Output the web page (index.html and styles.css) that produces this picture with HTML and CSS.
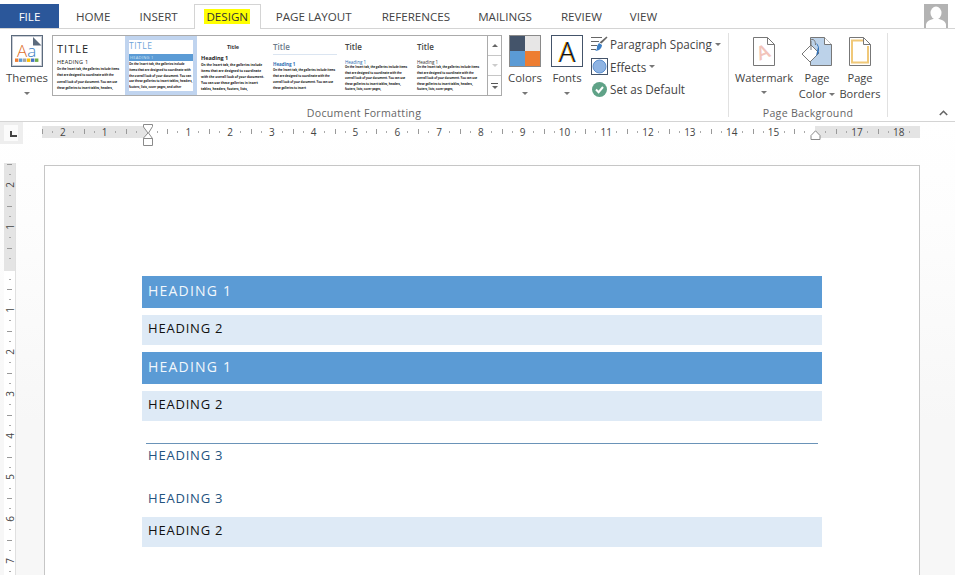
FILE: index.html
```html
<!DOCTYPE html>
<html lang="en">
<head>
<meta charset="utf-8">
<title>Design tab</title>
<link rel="stylesheet" href="styles.css">
</head>
<body>
<div class="app">
  <nav class="tabs">
    <div class="tab tab-file">FILE</div>
    <div class="tab tab-home">HOME</div>
    <div class="tab tab-insert">INSERT</div>
    <div class="tab tab-design"><span class="hl">DESIGN</span></div>
    <div class="tab tab-layout">PAGE LAYOUT</div>
    <div class="tab tab-refs">REFERENCES</div>
    <div class="tab tab-mail">MAILINGS</div>
    <div class="tab tab-review">REVIEW</div>
    <div class="tab tab-view">VIEW</div>
    <div class="avatar">
      <svg width="24" height="24" viewBox="0 0 24 24"><rect width="24" height="24" fill="#b3b3b3"/><ellipse cx="12" cy="9" rx="5.5" ry="6.5" fill="#fff"/><path d="M2 24v-3c0-3 3-5 7-6h6c4 1 7 3 7 6v3z" fill="#fff"/></svg>
    </div>
  </nav>

  <section class="ribbon">
    <div class="group group-doc">
      <div class="group-body">
        <div class="big big-themes">
          <svg class="big-icon" width="33" height="32" viewBox="0 0 33 32">
            <rect x=".5" y=".5" width="31" height="31" fill="#fff" stroke="#5c6b7d"/>
            <rect x="1.5" y="1.5" width="29" height="29" fill="#fff" stroke="#c9ced6"/>
            <path d="M22 2l8.500 8.500H22z" fill="#5c6b7d"/>
            <text x="6" y="21.500" class="aa">A<tspan fill="#3d7fc4">a</tspan></text>
            <rect x="4" y="23.500" width="3.400" height="3.400" fill="#ed7d31"/><rect x="8" y="23.500" width="3.400" height="3.400" fill="#5b9bd5"/><rect x="12" y="23.500" width="3.400" height="3.400" fill="#a5a5a5"/><rect x="16" y="23.500" width="3.400" height="3.400" fill="#ffc000"/><rect x="20" y="23.500" width="3.400" height="3.400" fill="#4472c4"/><rect x="24" y="23.500" width="3.400" height="3.400" fill="#70ad47"/>
          </svg>
          <span class="big-label">Themes</span>
          <i class="caret caret-big"></i>
        </div>

        <div class="gallery">
          <div class="thumb t1"><div class="t-title">TITLE</div><div class="t-head">HEADING 1</div><p>On the Insert tab, the galleries include items that are designed to coordinate with the overall look of your document. You can use these galleries to insert tables, headers,</p></div>
          <div class="thumb t2"><div class="t-title">TITLE</div><div class="t-head">HEADING 1</div><p>On the Insert tab, the galleries include items that are designed to coordinate with the overall look of your document. You can use these galleries to insert tables, headers, footers, lists, cover pages, and other</p></div>
          <div class="thumb t3"><div class="t-title">Title</div><div class="t-head">Heading 1</div><p>On the Insert tab, the galleries include items that are designed to coordinate with the overall look of your document. You can use these galleries in insert tables, headers, footers, lists,</p></div>
          <div class="thumb t4"><div class="t-title">Title</div><div class="t-head">Heading 1</div><p>On the Insert tab, the galleries include items that are designed to coordinate with the overall look of your document. You can use these galleries to insert</p></div>
          <div class="thumb t5"><div class="t-title">Title</div><div class="t-head">Heading 1</div><p>On the Insert tab, the galleries include items that are designed to coordinate with the overall look of your document. You can use these galleries to insert tables, headers, footers, lists, cover pages,</p></div>
          <div class="thumb t6"><div class="t-title">Title</div><div class="t-head">Heading 1</div><p>On the Insert tab, the galleries include items that are designed to coordinate with the overall look of your document. You can use these galleries to insert tables, headers, footers, lists, cover pages,</p></div>
          <div class="scroll">
            <div class="scroll-btn"><i class="tri-up"></i></div>
            <div class="scroll-btn off"><i class="tri-down"></i></div>
            <div class="scroll-btn more"><b></b><i class="tri-down"></i></div>
          </div>
        </div>

        <div class="big big-colors">
          <div class="swatch"><span class="s1"></span><span class="s2"></span><span class="s3"></span><span class="s4"></span></div>
          <span class="big-label">Colors</span>
          <i class="caret caret-big"></i>
        </div>
        <div class="big big-fonts">
          <div class="fontbox">A</div>
          <span class="big-label">Fonts</span>
          <i class="caret caret-big"></i>
        </div>

        <div class="stack">
          <div class="row">
            <svg width="17" height="17" viewBox="0 0 17 17"><path d="M0 1.500h11M0 5.500h8M0 9.500h6M0 13.500h5" stroke="#666" fill="none"/><path d="M15.500.500l1 1-6 6-2-1z" fill="#666"/><path d="M8 7l3 2c0 3-3 6-7 6 2-1 2-3 2-5z" fill="#3d7fc4"/></svg>
            <span>Paragraph Spacing</span><i class="caret"></i>
          </div>
          <div class="row">
            <svg width="17" height="17" viewBox="0 0 17 17"><rect x=".5" y=".5" width="16" height="16" fill="#fff" stroke="#44546a"/><circle cx="8.500" cy="8.500" r="6.500" fill="#8fb4e3" stroke="#5b8fd0"/></svg>
            <span>Effects</span><i class="caret"></i>
          </div>
          <div class="row">
            <svg width="17" height="17" viewBox="0 0 17 17"><circle cx="8.500" cy="8.500" r="7.500" fill="#5fa287"/><path d="M5 8.500l2.600 2.700L12 6" stroke="#fff" stroke-width="2" fill="none"/></svg>
            <span>Set as Default</span>
          </div>
        </div>
      </div>
      <div class="group-label">Document Formatting</div>
    </div>

    <div class="group group-bg">
      <div class="group-body">
        <div class="pg pg-water">
          <svg width="24" height="29" viewBox="0 0 24 29"><path d="M1.500.500h14l7 7v21h-21z" fill="#fff" stroke="#777"/><path d="M15.500.500v7h7" fill="none" stroke="#777"/><text x="5" y="22" class="wm" transform="rotate(-22 11 16)">A</text></svg>
          <span class="pg-label">Watermark</span>
          <i class="caret caret-pg"></i>
        </div>
        <div class="pg pg-color">
          <svg width="32" height="29" viewBox="0 0 32 29"><path d="M9.500.500h14l7 7v21h-21z" fill="#bcd2e9" stroke="#777"/><path d="M23.500.500v7h7" fill="#fff" stroke="#777"/><path d="M1 17l9-9 8 8-9 9z" fill="#fff" stroke="#777"/><path d="M10 4v9" stroke="#777"/><path d="M9.500 3c4-2 5 2 5 5" fill="none" stroke="#777"/><path d="M15 6c3 2 4 6 2 11l-2 2 2-9z" fill="#2f6fb5"/></svg>
          <span class="pg-label">Page</span>
          <span class="pg-label">Color<i class="caret"></i></span>
        </div>
        <div class="pg pg-border">
          <svg width="22" height="29" viewBox="0 0 22 29"><path d="M.5.500h14l7 7v21h-21z" fill="#fff" stroke="#777"/><path d="M14.500.500v7h7" fill="none" stroke="#777"/><path d="M14 3.500H3v22h16V9" fill="none" stroke="#f0c878" stroke-width="2"/></svg>
          <span class="pg-label">Page</span>
          <span class="pg-label">Borders</span>
        </div>
      </div>
      <div class="group-label">Page Background</div>
    </div>

    <div class="collapse">
      <svg width="9" height="6" viewBox="0 0 9 6"><path d="M.8 5l3.700-3.700L8.200 5" fill="none" stroke="#666" stroke-width="1.600"/></svg>
    </div>
  </section>

  <main class="work">
    <div class="ruler-row">
      <div class="corner"><i></i></div>
      <div class="hruler">
        <span>2</span><span>1</span><span></span><span>1</span><span>2</span><span>3</span><span>4</span><span>5</span><span>6</span><span>7</span><span>8</span><span>9</span><span>10</span><span>11</span><span>12</span><span>13</span><span>14</span><span>15</span><span></span><span>17</span><span>18</span>
        <svg class="mark-left" width="11" height="23" viewBox="0 0 11 23"><path d="M.5.500h9v2L5.500 9l4 5.500H.5V14l4.500-5L.5 3zM.5 14.500h9v7h-9z" fill="#fff" stroke="#8a8a8a"/></svg>
        <svg class="mark-right" width="11" height="10" viewBox="0 0 11 10"><path d="M5.500.800l4.500 4.700v4H1v-4z" fill="#fff" stroke="#8a8a8a"/></svg>
      </div>
    </div>
    <div class="doc-row">
      <div class="vruler">
        <span><b>2</b></span><span><b>1</b></span><span></span><span><b>1</b></span><span><b>2</b></span><span><b>3</b></span><span><b>4</b></span><span><b>5</b></span><span><b>6</b></span><span><b>7</b></span>
      </div>
      <article class="page">
        <h1 class="h h1">HEADING 1</h1>
        <h2 class="h h2">HEADING 2</h2>
        <h1 class="h h1">HEADING 1</h1>
        <h2 class="h h2">HEADING 2</h2>
        <h3 class="h h3 first">HEADING 3</h3>
        <h3 class="h h3 second">HEADING 3</h3>
        <h2 class="h h2 last">HEADING 2</h2>
      </article>
    </div>
  </main>
</div>
</body>
</html>
```

FILE: styles.css
```css
* { box-sizing: border-box; }
html, body { margin: 0; padding: 0; }
body { width: 955px; height: 575px; overflow: hidden; background: #fff; font-family: "Open Sans", "Noto Sans", sans-serif; color: #444; }
.app { width: 955px; height: 575px; display: flex; flex-direction: column; overflow: hidden; }

/* tabs */
.tabs { height: 29px; flex: none; display: flex; align-items: flex-end; border-bottom: 1px solid #d4d4d4; font-size: 11.600px; padding-top: 4px; }
.tab { height: 24px; line-height: 25px; color: #444; flex: none; }
.tab-file { width: 59px; background: #2b579a; color: #fff; text-align: center; }
.tab-home { margin-left: 17px; }
.tab-insert { margin-left: 29px; }
.tab-design { margin-left: 16px; width: 67px; height: 25px; border: 1px solid #d4d4d4; border-bottom: 0; background: #fff; margin-bottom: -1px; text-align: center; line-height: 24px; }
.hl { background: #ffff00; display: inline-block; height: 15px; line-height: 15px; width: 46px; color: #333; }
.tab-layout { margin-left: 15px; }
.tab-refs { margin-left: 30px; }
.tab-mail { margin-left: 28px; }
.tab-review { margin-left: 29px; }
.tab-view { margin-left: 28px; }
.avatar { margin-left: auto; margin-right: 7px; height: 24px; width: 24px; overflow: hidden; }
.avatar svg { display: block; }

/* ribbon */
.ribbon { height: 93px; flex: none; display: flex; border-bottom: 1px solid #d4d4d4; background: #fff; position: relative; }
.group { display: flex; flex-direction: column; border-right: 1px solid #e1e1e1; height: 84px; margin-top: 4px; }
.group-doc { width: 729px; }
.group-bg { width: 159px; }
.group-body { flex: 1; display: flex; min-height: 0; }
.group-label { height: 15px; margin-bottom: -4px; margin-top: 1px; text-align: center; font-size: 10.600px; line-height: 14px; letter-spacing: .3px; color: #666; flex: none; }

.big { display: flex; flex-direction: column; align-items: center; font-size: 11.400px; flex: none; }
.big-label { margin-top: 2px; line-height: 17px; height: 17px; color: #444; }
.big-themes { width: 54px; margin-top: 2px; }
.big-themes .big-icon { margin-left: 1px; }
.big-colors { width: 42px; margin-top: 2px; }
.big-fonts { width: 42px; margin-top: 2px; }
.aa { font-family: "Open Sans", sans-serif; font-size: 17px; font-weight: 300; fill: #e0702c; }
.caret { display: inline-block; width: 0; height: 0; border: 3px solid transparent; border-top: 3px solid #777; border-bottom: 0; margin-left: 3px; vertical-align: 2px; }
.caret-big { margin: 6px 0 0; }
.caret-pg { margin: 5px 0 0; }

/* gallery */
.gallery { width: 450px; height: 61px; margin-top: 2px; margin-left: -2px; margin-right: 2px; flex: none; border: 1px solid #ababab; display: flex; background: #fff; overflow: hidden; }
.thumb { width: 72px; height: 59px; flex: none; overflow: hidden; padding: 0 4px; font-size: 4px; color: #111; }
.thumb p { margin: 0; font-size: 2.800px; line-height: 6.300px; font-weight: 700; font-family: "Open Sans", sans-serif; }
.t-title { white-space: nowrap; }
.t1 .t-title { font-size: 11px; letter-spacing: 1px; line-height: 16px; margin-top: 5px; color: #222; }
.t1 .t-head { font-size: 5.500px; letter-spacing: .3px; line-height: 8px; margin-top: 1px; color: #222; }
.t2 { width: 72px; border: 4px solid #c0d4ef; padding: 0; }
.t2 .t-title { font-size: 8.500px; letter-spacing: .5px; color: #6fa4d8; line-height: 12px; }
.t2 .t-head { font-size: 4px; background: #5b9bd5; color: #d8e6f4; height: 7px; line-height: 7px; margin-top: 2px; letter-spacing: .3px; padding-left: 1px; }
.thumb.t2 p { margin-top: 1px; line-height: 5.800px; font-size: 2.900px; }
.t3 .t-title { font-size: 5.500px; font-weight: 700; text-align: center; line-height: 8px; margin-top: 7px; color: #333; }
.t3 .t-head { font-size: 5.500px; font-weight: 700; line-height: 8px; margin-top: 3px; color: #222; }
.thumb.t3 p { line-height: 6px; font-size: 3.200px; }
.t4 .t-title { font-size: 8px; font-weight: 600; color: #6b7a8a; line-height: 11px; margin-top: 5px; border-bottom: 1px solid #dbe5f1; padding-bottom: 2px; }
.t4 .t-head { font-size: 4.500px; font-weight: 700; color: #2b6cb0; line-height: 6px; margin-top: 6px; }
.thumb.t4 p { line-height: 6px; }
.t5 .t-title, .t6 .t-title { font-size: 8px; font-weight: 600; color: #444; line-height: 11px; margin-top: 5px; }
.t5 .t-head, .t6 .t-head { font-size: 4.500px; color: #2b6cb0; line-height: 6px; margin-top: 7px; }
.t6 .t-head { color: #333; }
.thumb.t5 p, .thumb.t6 p { line-height: 5.600px; }
.scroll { margin-left: auto; width: 14px; flex: none; border-left: 1px solid #ababab; display: flex; flex-direction: column; }
.scroll-btn { flex: 1; display: flex; flex-direction: column; align-items: center; justify-content: center; border-bottom: 1px solid #c6c6c6; }
.scroll-btn.more { border-bottom: 0; gap: 2px; }
.scroll-btn.more b { width: 7px; height: 1px; background: #555; }
.tri-up { width: 0; height: 0; border: 3.500px solid transparent; border-bottom: 3.500px solid #666; border-top: 0; }
.tri-down { width: 0; height: 0; border: 3.500px solid transparent; border-top: 3.500px solid #666; border-bottom: 0; }
.off .tri-down { border-top-color: #ccc; }

.swatch { width: 32px; height: 32px; display: grid; grid-template-columns: 1fr 1fr; grid-template-rows: 1fr 1fr; border: 1px solid #8a8a8a; }
.s1 { background: #44546a; }
.s2 { background: #e7e6e6; }
.s3 { background: #5b9bd5; }
.s4 { background: #ed7d31; }
.fontbox { width: 32px; height: 32px; border: 1px solid #44546a; text-align: center; font-size: 27px; line-height: 31px; color: #111; text-shadow: -.6px 0 0 #ffb000, .6px 0 0 #3a8fe0; font-family: "Open Sans", sans-serif; font-weight: 300; }

.stack { margin-left: 3px; margin-top: 0; display: flex; flex-direction: column; font-size: 11.700px; flex: none; }
.row { display: flex; align-items: center; height: 22.500px; gap: 1px; color: #444; white-space: nowrap; }
.row svg { flex: none; margin-right: 1px; }
.row .caret { margin-left: 2px; vertical-align: 0; }

.pg { display: flex; flex-direction: column; align-items: center; font-size: 11.100px; flex: none; }
.pg svg { height: 29px; flex: none; margin-bottom: 4px; }
.pg-label { line-height: 15.500px; height: 15.500px; color: #444; white-space: nowrap; }
.pg-water { width: 70px; padding-top: 4px; }
.pg-color { width: 36px; padding-top: 4px; }
.pg-border { width: 50px; padding-top: 4px; }
.wm { font-family: "Open Sans", sans-serif; font-size: 19px; font-weight: 600; fill: #f2c4ba; }
.collapse { position: absolute; right: 7px; bottom: 1px; height: 10px; line-height: 10px; }
.collapse svg { display: block; }

/* work area */
.work { flex: 1; min-height: 0; display: flex; flex-direction: column; background: linear-gradient(#fff 0, #fdfdfd 100px, #f7f7f7 300px); overflow: hidden; }
.ruler-row { height: 43px; flex: none; display: flex; align-items: flex-start; position: relative; }
.corner { width: 23px; height: 22px; background: #eee; flex: none; padding: 3px 5px 3px 4px; margin-right: 19px; }
.corner i { display: block; width: 14px; height: 16px; background: #fbfbfb; position: relative; }
.corner i::after { content: ""; position: absolute; left: 6px; top: 6px; width: 5px; height: 4px; border-left: 2px solid #444; border-bottom: 2px solid #444; }
.hruler { margin-top: 4px; display: flex; width: 878px; height: 12px; flex: none; background: linear-gradient(90deg, #e4e4e4 105px, #fff 105px, #fff 773px, #e4e4e4 773px); position: relative; }
.hruler > span { flex: 0 0 41.800px; text-align: center; font-size: 10px; line-height: 12px; color: #444;
  background-image: linear-gradient(#999, #999), linear-gradient(#aaa, #aaa), linear-gradient(#aaa, #aaa);
  background-repeat: no-repeat;
  background-size: 1px 5px, 1px 2px, 1px 2px;
  background-position: 0 3px, 10px 5px, 31px 5px; }
.mark-left { position: absolute; left: 101px; top: -2px; }
.mark-right { position: absolute; left: 768px; top: 4px; }

.doc-row { flex: 1; min-height: 0; display: flex; align-items: flex-start; padding-left: 4px; }
.vruler { width: 12px; flex: none; display: flex; flex-direction: column; background: linear-gradient(#e4e4e4 108px, #fff 108px); border-right: 1px solid #e0e0e0; height: 420px; margin-top: -2px; padding-top: 1px; margin-right: 28px; }
.vruler > span { flex: 0 0 41.800px; display: flex; align-items: center; justify-content: center;
  background-image: linear-gradient(#999, #999), linear-gradient(#aaa, #aaa), linear-gradient(#aaa, #aaa);
  background-repeat: no-repeat;
  background-size: 5px 1px, 2px 1px, 2px 1px;
  background-position: 3px 0, 5px 10px, 5px 31px; }
.vruler b { display: block; font-weight: 400; font-size: 10px; line-height: 10px; color: #444; transform: rotate(-90deg); }

.page { width: 876px; height: 500px; flex: none; background: #fff; border: 1px solid #c6c6c6; padding: 110px 97px 0 97px; }
.h { margin: 0; font-weight: 400; font-size: 13px; letter-spacing: .8px; font-family: "Open Sans", sans-serif; padding-left: 6px; }
.h1 { height: 32px; line-height: 30px; background: #5b9bd5; color: #f2f7fc; margin-bottom: 7px; font-size: 14px; letter-spacing: 1.200px; }
.h2 { height: 30px; line-height: 27px; background: #deeaf6; color: #111; margin-bottom: 7px; }
.h3 { color: #24537f; height: 24px; line-height: 24px; background: none; }
.h3.first { margin: 22px 4px 0; padding-left: 2px; border-top: 1px solid #6a93b8; line-height: 22px; }
.h3.second { margin-top: 19px; }
.h2.last { margin-top: 7px; }
```
